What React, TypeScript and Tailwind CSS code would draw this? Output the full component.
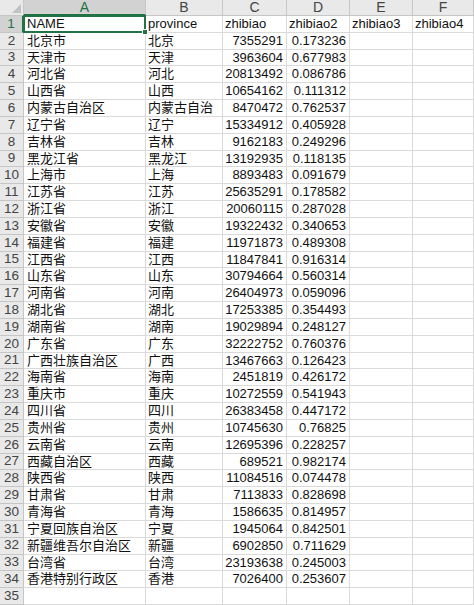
const rows: [string, string, string, string][] = [
	['北京市', '北京', '7355291', '0.173236'],
	['天津市', '天津', '3963604', '0.677983'],
	['河北省', '河北', '20813492', '0.086786'],
	['山西省', '山西', '10654162', '0.111312'],
	['内蒙古自治区', '内蒙古自治', '8470472', '0.762537'],
	['辽宁省', '辽宁', '15334912', '0.405928'],
	['吉林省', '吉林', '9162183', '0.249296'],
	['黑龙江省', '黑龙江', '13192935', '0.118135'],
	['上海市', '上海', '8893483', '0.091679'],
	['江苏省', '江苏', '25635291', '0.178582'],
	['浙江省', '浙江', '20060115', '0.287028'],
	['安徽省', '安徽', '19322432', '0.340653'],
	['福建省', '福建', '11971873', '0.489308'],
	['江西省', '江西', '11847841', '0.916314'],
	['山东省', '山东', '30794664', '0.560314'],
	['河南省', '河南', '26404973', '0.059096'],
	['湖北省', '湖北', '17253385', '0.354493'],
	['湖南省', '湖南', '19029894', '0.248127'],
	['广东省', '广东', '32222752', '0.760376'],
	['广西壮族自治区', '广西', '13467663', '0.126423'],
	['海南省', '海南', '2451819', '0.426172'],
	['重庆市', '重庆', '10272559', '0.541943'],
	['四川省', '四川', '26383458', '0.447172'],
	['贵州省', '贵州', '10745630', '0.76825'],
	['云南省', '云南', '12695396', '0.228257'],
	['西藏自治区', '西藏', '689521', '0.982174'],
	['陕西省', '陕西', '11084516', '0.074478'],
	['甘肃省', '甘肃', '7113833', '0.828698'],
	['青海省', '青海', '1586635', '0.814957'],
	['宁夏回族自治区', '宁夏', '1945064', '0.842501'],
	['新疆维吾尔自治区', '新疆', '6902850', '0.711629'],
	['台湾省', '台湾', '23193638', '0.245003'],
	['香港特别行政区', '香港', '7026400', '0.253607'],
]

const cols = ['A', 'B', 'C', 'D', 'E', 'F']

const cell = 'h-[16.83px] overflow-hidden whitespace-nowrap border-r border-b border-[#dadada] leading-[16px]'
const rowHead = 'h-[16.83px] flex items-center justify-center border-r border-b border-[#c6c6c6] bg-[#e9e9e9] text-[#444] text-[13.5px]'

function Row({ n, values }: { n: number; values: string[] }) {
	return (
		<>
			<div className={rowHead}>{n}</div>
			<div className={`${cell} pl-[3px]`}>{values[0]}</div>
			<div className={`${cell} pl-[2px]`}>{values[1]}</div>
			<div className={`${cell} pr-[3px] text-right`}>{values[2]}</div>
			<div className={`${cell} pr-[3px] text-right`}>{values[3]}</div>
			<div className={cell} />
			<div className={cell} />
		</>
	)
}

export default function App() {
	return (
		<div
			className="h-[605px] w-[474px] overflow-hidden bg-white text-[13px] text-[#111]"
			style={{ fontFamily: '"Liberation Sans", "Noto Sans CJK SC", sans-serif' }}
		>
			<div className="grid grid-cols-[24px_122px_77px_64px_63px_63px_61px]">
				{/* corner */}
				<div className="relative h-[16px] border-r border-b border-[#c6c6c6] bg-[#e9e9e9]">
					<svg className="absolute right-[2px] bottom-[2px]" width="9" height="9" viewBox="0 0 9 9">
						<polygon points="9,0 9,9 0,9" fill="#c2c2c2" />
					</svg>
				</div>
				{cols.map(c => (
					<div
						key={c}
						className={
							c === 'A'
								? 'flex h-[16px] items-center justify-center border-r border-b-2 border-r-[#c6c6c6] border-b-[#217346] bg-[#d2d2d2] text-[14px] text-[#217346]'
								: 'flex h-[16px] items-center justify-center border-r border-b border-[#c6c6c6] bg-[#e9e9e9] text-[14px] text-[#444]'
						}
					>
						{c}
					</div>
				))}

				{/* row 1 */}
				<div className="flex h-[16.83px] items-center justify-center border-r-2 border-b border-r-[#217346] border-b-[#c6c6c6] bg-[#d2d2d2] text-[13.5px] text-[#217346]">
					1
				</div>
				<div className="relative h-[16.83px] whitespace-nowrap border-r border-b border-[#dadada] pl-[3px] leading-[16px]">
					<div className="absolute -left-px -top-px -right-px -bottom-px border-2 border-[#217346]" />
					<div className="absolute -right-[3px] -bottom-[3px] h-[6px] w-[6px] border border-white bg-[#217346]" />
					NAME
				</div>
				<div className={`${cell} pl-[2px]`}>province</div>
				<div className={`${cell} pl-[2px]`}>zhibiao</div>
				<div className={`${cell} pl-[2px]`}>zhibiao2</div>
				<div className={`${cell} pl-[2px]`}>zhibiao3</div>
				<div className={`${cell} pl-[2px]`}>zhibiao4</div>

				{rows.map((r, i) => (
					<Row key={i} n={i + 2} values={r} />
				))}
				<Row n={35} values={['', '', '', '']} />
			</div>
		</div>
	)
}
